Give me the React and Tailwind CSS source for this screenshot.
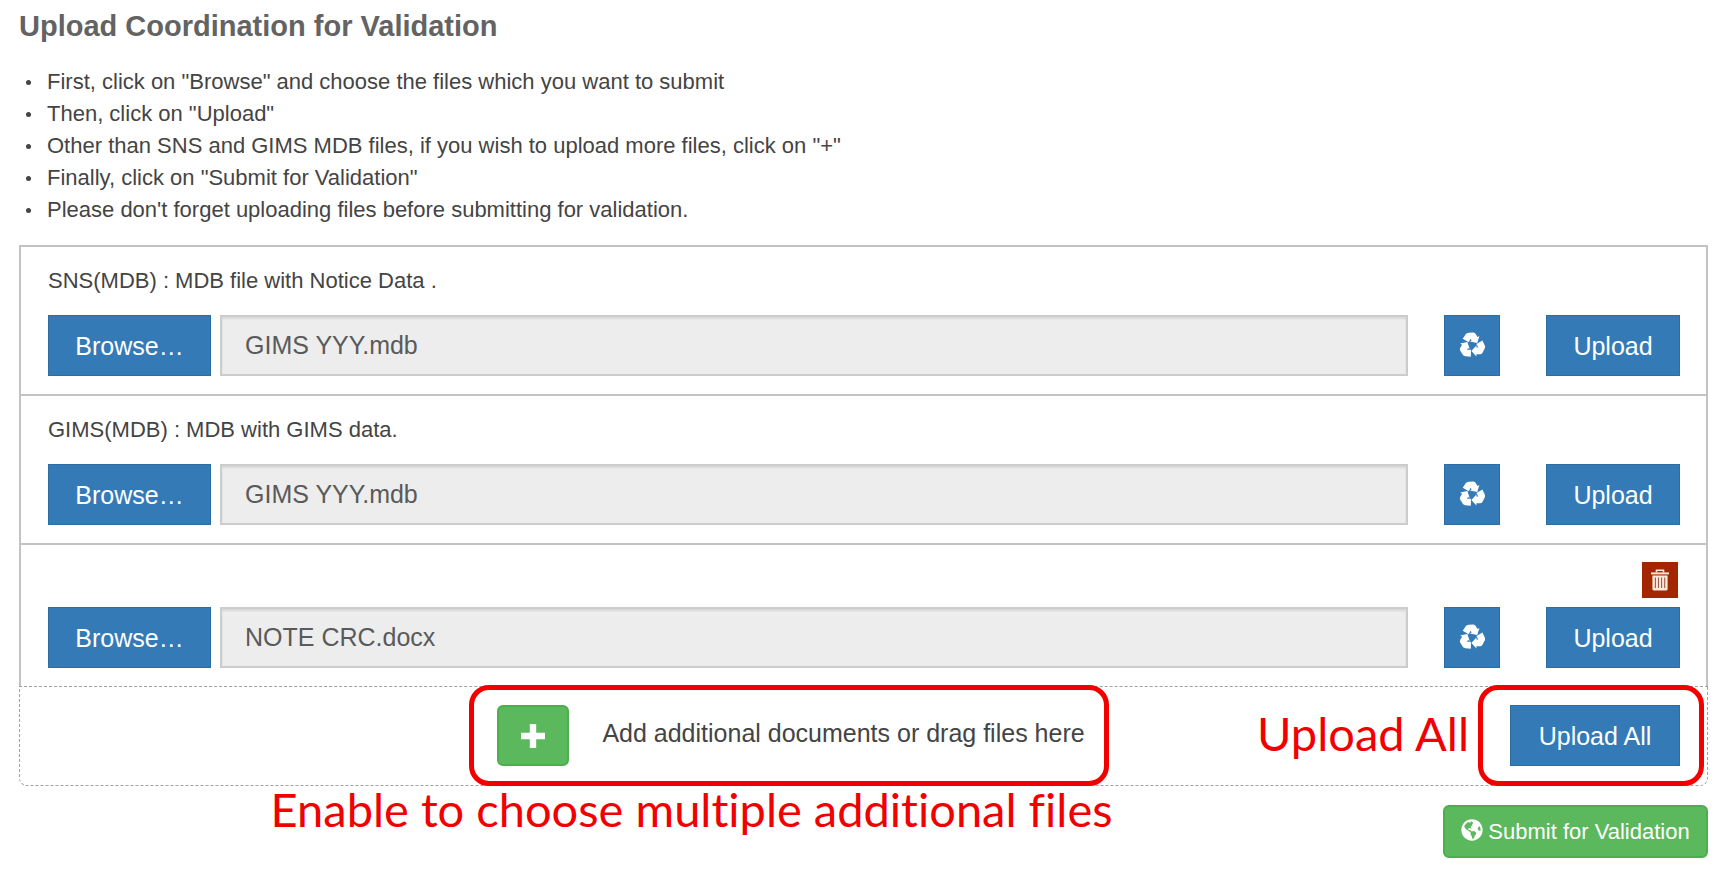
import { FaGlobeAmericas } from "react-icons/fa";

const steps = [
  'First, click on "Browse" and choose the files which you want to submit',
  'Then, click on "Upload"',
  'Other than SNS and GIMS MDB files, if you wish to upload more files, click on "+"',
  'Finally, click on "Submit for Validation"',
  "Please don't forget uploading files before submitting for validation.",
];

const files = [
  { id: "sns", label: "SNS(MDB) : MDB file with Notice Data .", name: "GIMS YYY.mdb" },
  { id: "gims", label: "GIMS(MDB) : MDB with GIMS data.", name: "GIMS YYY.mdb" },
  { id: "extra", name: "NOTE CRC.docx" },
];

const recycleArm =
  "M17.4 13 23.4 9.6 25.8 14.6Q26.4 16.2 25.7 17.6L23.4 22Q22.6 23.2 21 23.2H17.4V25.4L12.4 20 17.4 14.4V16.4H19.3Z";

function RecycleIcon() {
  return (
    <svg viewBox="0 0 26 26" className="mb-1 size-[26px]" fill="#fff" aria-hidden="true">
      <path d={recycleArm} />
      <path d={recycleArm} transform="rotate(120 13 14.3)" />
      <path d={recycleArm} transform="rotate(240 13 14.3)" />
    </svg>
  );
}

function TrashIcon() {
  return (
    <svg viewBox="0 0 18 22" className="h-[22px] w-[18px]" aria-hidden="true">
      <path d="M5.5 3.5V1.2h7v2.3" fill="none" stroke="#fbe9dd" strokeWidth="1.6" />
      <path d="M0 3.4h18v2H0z" fill="#fbe9dd" />
      <path d="M1.4 6.6h15.2V20q0 1.4-1.4 1.4H2.8Q1.4 21.4 1.4 20z" fill="#fbe9dd" />
      <path d="M4.4 8.4v10.6M7.5 8.4v10.6M10.6 8.4v10.6M13.7 8.4v10.6" stroke="#a0593f" strokeWidth="1.1" />
    </svg>
  );
}

function PlusIcon() {
  return (
    <svg viewBox="0 0 24 24" className="size-6" aria-hidden="true">
      <path d="M8.8 0h6.4v8.8H24v6.4h-8.8V24H8.8v-8.8H0V8.8h8.8z" fill="#fff" />
    </svg>
  );
}

function BlueButton({ className, children, ...rest }) {
  return (
    <button
      type="button"
      className={`flex h-[61px] shrink-0 items-center justify-center border border-[#2e6da4] bg-[#337ab7] text-[25px] leading-8 text-white ${className}`}
      {...rest}
    >
      {children}
    </button>
  );
}

function FileRow({ file }) {
  return (
    <div className="border-x-2 border-t-2 border-[#c3c3c3] pt-[17px] pr-[26px] pb-[18px] pl-[27px]">
      {file.label ? (
        <label htmlFor={file.id} className="mb-[18px] block text-[22px] leading-[33px]">
          {file.label}
        </label>
      ) : (
        <div className="mb-[9px] flex justify-end pr-0.5">
          <button
            type="button"
            aria-label="Remove file"
            className="flex size-9 items-center justify-center bg-[#a32600]"
          >
            <TrashIcon />
          </button>
        </div>
      )}
      <div className="flex items-center">
        <BlueButton className="mr-[9px] w-[163px]">Browse…</BlueButton>
        <input
          id={file.id}
          type="text"
          readOnly
          aria-label={file.label ? undefined : "Additional file"}
          defaultValue={file.name}
          className="h-[61px] min-w-0 flex-1 border-2 border-[#cccccc] bg-[#ededed] px-[23px] text-[25px] text-[#5a5a5a] shadow-[inset_0_2px_2px_rgba(0,0,0,0.09)] outline-none"
        />
        <BlueButton className="ml-9 w-14" aria-label="Reset file">
          <RecycleIcon />
        </BlueButton>
        <BlueButton className="ml-[46px] w-[134px]">Upload</BlueButton>
      </div>
    </div>
  );
}

export default function App() {
  return (
    <main className="min-h-screen bg-white pt-2 pr-[25px] pb-8 pl-[19px] font-['Liberation_Sans',Arial,sans-serif] text-[#444444]">
      <h1 className="text-[29px] leading-9 font-bold text-[#636363]">
        Upload Coordination for Validation
      </h1>
      <ul className="mt-[22px] mb-[19px] text-[22px] leading-8">
        {steps.map((step) => (
          <li key={step} className="flex items-center">
            <span className="mr-4 ml-[7px] size-[5px] shrink-0 rounded-full bg-[#444444]" aria-hidden="true" />
            {step}
          </li>
        ))}
      </ul>

      <section>
        {files.map((file) => (
          <FileRow key={file.id} file={file} />
        ))}
        <div className="flex items-center rounded-b-lg border border-dashed border-[#a0a0a0] pt-[18px] pr-[27px] pb-[19px] pl-[52px]">
          <div className="flex flex-1 justify-center">
            <div className="relative flex items-center gap-[33px]">
              <button
                type="button"
                aria-label="Add document"
                className="flex h-[61px] w-[72px] items-center justify-center rounded-md border-2 border-[#4cae4c] bg-[#5cb85c]"
              >
                <PlusIcon />
              </button>
              <p className="mb-1.5 text-[25px] leading-8 whitespace-nowrap">
                Add additional documents or drag files here
              </p>
              <div className="pointer-events-none absolute -top-5 -right-6 -bottom-5 -left-7 rounded-[20px] border-[5px] border-[#f20000]" />
              <p className="absolute top-[76px] right-[-28px] font-['Lato',sans-serif] text-[47px] leading-[56px] whitespace-nowrap text-[#f20000] [font-variant-ligatures:none]">
                Enable to choose multiple additional files
              </p>
            </div>
          </div>
          <div className="relative">
            <BlueButton className="w-[170px]">Upload All</BlueButton>
            <div className="pointer-events-none absolute -top-5 -right-6 -bottom-5 -left-8 rounded-[20px] border-[5px] border-[#f20000]" />
            <p className="absolute top-0 right-[211px] font-['Lato',sans-serif] text-[47px] leading-[56px] whitespace-nowrap text-[#f20000]">
              Upload All
            </p>
          </div>
        </div>
      </section>

      <div className="mt-[19px] flex justify-end">
        <button
          type="button"
          className="flex h-[53px] w-[265px] items-center justify-center gap-[5px] rounded-md border-2 border-[#4cae4c] bg-[#5cb85c] text-[22px] leading-7 text-white"
        >
          <FaGlobeAmericas className="mb-1 size-[22px]" />
          Submit for Validation
        </button>
      </div>
    </main>
  );
}
